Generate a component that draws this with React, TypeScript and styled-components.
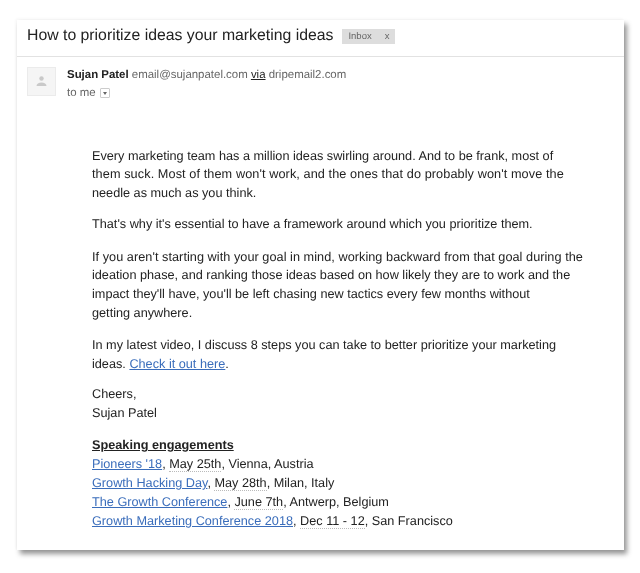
import styled, { createGlobalStyle } from "styled-components";

const Global = createGlobalStyle`
  html, body {
    margin: 0;
    padding: 0;
    background: #fff;
  }
  body {
    width: 640px;
    height: 573px;
    overflow: hidden;
    font-family: "Liberation Sans", Arial, sans-serif;
    text-rendering: geometricPrecision;
  }
`;

const Page = styled.div`
  padding: 20px 16px 0 17px;
`;

const Card = styled.div`
  height: 530px;
  background: #fff;
  filter: blur(0.45px);
  box-shadow: 3px 4px 5px rgba(0, 0, 0, 0.42), -1px -1px 3px rgba(0, 0, 0, 0.05);
`;

const Header = styled.div`
  height: 37px;
  display: flex;
  align-items: center;
  padding: 0 0 4px 10px;
  box-sizing: border-box;
  border-bottom: 1px solid #e2e2e2;
`;

const Subject = styled.h1`
  margin: 0;
  font-size: 15.8px;
  font-weight: 400;
  color: #222;
`;

const Label = styled.span`
  margin-left: 9px;
  width: 53px;
  height: 15px;
  box-sizing: border-box;
  padding: 0 6px;
  display: flex;
  align-items: center;
  justify-content: space-between;
  background: #dddddd;
  color: #666;
  font-size: 9.5px;
`;

const Meta = styled.div`
  display: flex;
  padding: 10px 0 0 10px;
  gap: 11px;
`;

const Avatar = styled.div`
  width: 29px;
  height: 29px;
  box-sizing: border-box;
  display: flex;
  align-items: center;
  justify-content: center;
  background: #f5f5f5;
  border: 1px solid #ebebeb;
`;

const Sender = styled.div`
  margin-top: 1px;
  font-size: 11.45px;
  line-height: 14px;
  color: #666;
`;

const Name = styled.b`
  color: #222;
`;

const Via = styled.span`
  color: #222;
  text-decoration: underline;
`;

const ToMe = styled.div`
  display: flex;
  align-items: center;
  gap: 4px;
  margin-top: 4px;
  font-size: 11.45px;
  line-height: 14px;
  color: #666;
`;

const Caret = styled.span`
  width: 10px;
  height: 10px;
  box-sizing: border-box;
  border: 1px solid #ccc;
  border-radius: 1px;
  display: flex;
  align-items: center;
  justify-content: center;
  &::after {
    content: "";
    border-top: 3px solid #666;
    border-left: 2.5px solid transparent;
    border-right: 2.5px solid transparent;
  }
`;

const Body = styled.div`
  padding: 46.5px 20px 0 75px;
  font-size: 12.7px;
  line-height: 18.8px;
  color: #222;
  white-space: nowrap;
`;

const Para = styled.p<{ $gap?: number }>`
  margin: 0 0 ${(p) => p.$gap ?? 12}px;
`;

const Wide = styled.span<{ $spacing: number }>`
  letter-spacing: ${(p) => p.$spacing}px;
`;

const Strong = styled.span`
  font-weight: 700;
  text-decoration: underline;
`;

const Events = styled.div`
  line-height: 19px;
`;

const Link = styled.a`
  color: #3a6dbb;
  text-decoration: underline;
`;

const Dotted = styled.span`
  border-bottom: 1px dotted #bbb;
`;

const events = [
  { link: "Pioneers '18", date: "May 25th", rest: ", Vienna, Austria" },
  { link: "Growth Hacking Day", date: "May 28th", rest: ", Milan, Italy" },
  { link: "The Growth Conference", date: "June 7th", rest: ", Antwerp, Belgium" },
  { link: "Growth Marketing Conference 2018", date: "Dec 11 - 12", rest: ", San Francisco" },
];

export default function App() {
  return (
    <Page>
      <Global />
      <Card>
        <Header>
          <Subject>How to prioritize ideas your marketing ideas</Subject>
          <Label>
            <span>Inbox</span>
            <span>x</span>
          </Label>
        </Header>
        <Meta>
          <Avatar>
            <svg width="13" height="13" viewBox="0 0 13 13" fill="#c9c9c9">
              <circle cx="6.5" cy="3.5" r="2.2" />
              <path d="M1.5 11c0-2.4 2.2-3.6 5-3.6s5 1.2 5 3.6z" />
            </svg>
          </Avatar>
          <div>
            <Sender>
              <Name>Sujan Patel</Name> email@sujanpatel.com <Via>via</Via> dripemail2.com
            </Sender>
            <ToMe>
              to me <Caret />
            </ToMe>
          </div>
        </Meta>
        <Body>
          <Para>
            Every marketing team has a million ideas swirling around. And to be frank, most of
            <br />
            <Wide $spacing={0.09}>
              them suck. Most of them won't work, and the ones that do probably won't move the
            </Wide>
            <br />
            needle as much as you think.
          </Para>
          <Para $gap={14}>
            That's why it's essential to have a framework around which you prioritize them.
          </Para>
          <Para $gap={13}>
            <Wide $spacing={0.045}>
              If you aren't starting with your goal in mind, working backward from that goal during the
            </Wide>
            <br />
            ideation phase, and ranking those ideas based on how likely they are to work and the
            <br />
            impact they'll have, you'll be left chasing new tactics every few months without
            <br />
            getting anywhere.
          </Para>
          <Para>
            In my latest video, I discuss 8 steps you can take to better prioritize your marketing
            <br />
            ideas. <Link href="#">Check it out here</Link>.
          </Para>
          <Para $gap={13}>
            Cheers,
            <br />
            Sujan Patel
          </Para>
          <Events>
            <Strong>Speaking engagements</Strong>
            {events.map((e) => (
              <div key={e.link}>
                <Link href="#">{e.link}</Link>, <Dotted>{e.date}</Dotted>
                {e.rest}
              </div>
            ))}
          </Events>
        </Body>
      </Card>
    </Page>
  );
}
